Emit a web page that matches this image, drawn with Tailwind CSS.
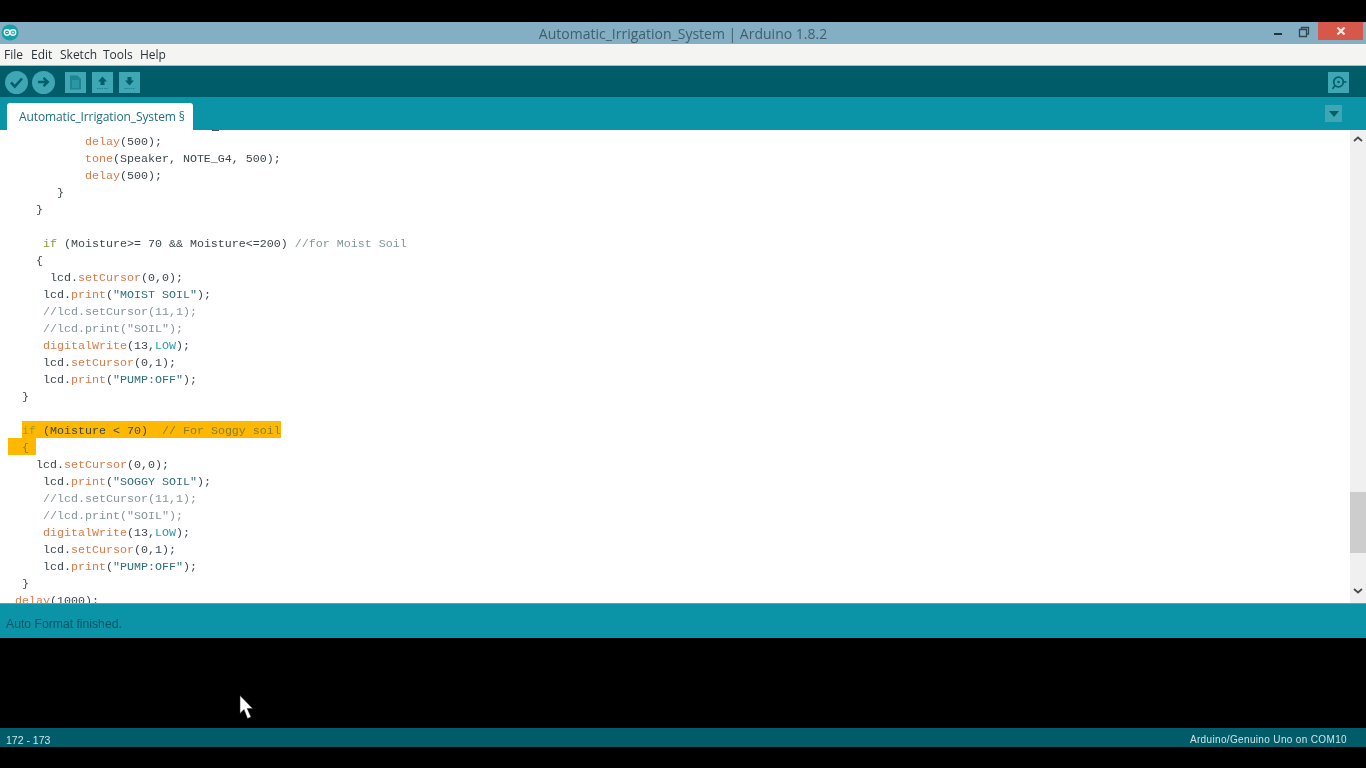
<!DOCTYPE html>
<html><head><meta charset="utf-8"><title>Arduino</title>
<script src="https://cdn.jsdelivr.net/npm/@tailwindcss/browser@4"></script></head>
<body class="m-0 bg-black">
<div class="relative flex flex-col w-[1366px] h-[768px] overflow-hidden bg-black font-['Open_Sans',sans-serif]">
  <div class="h-[22px] shrink-0"></div>
  <!-- title bar -->
  <div class="relative h-[22px] shrink-0 bg-[#84aec3] flex items-center justify-center">
    <svg class="absolute left-[1px] top-[2px]" width="18" height="17" viewBox="0 0 18 17"><ellipse cx="9" cy="8.5" rx="8.5" ry="8" fill="#17a1a5"/><g fill="none" stroke="#e8f6f6" stroke-width="1.4"><circle cx="6" cy="8.5" r="2.7"/><circle cx="12" cy="8.5" r="2.7"/></g><path d="M4.8 8.5h2.4M10.8 8.5h2.4M12 7.3v2.4" stroke="#e8f6f6" stroke-width=".8"/></svg>
    <span class="text-[14px] text-[#3f5f6c] blur-[0.4px]">Automatic_Irrigation_System | Arduino 1.8.2</span>
    <div class="absolute right-[3px] top-0 h-[18px] w-[45px] bg-[#d6584a] flex items-center justify-center">
      <svg width="10" height="10" viewBox="0 0 10 10"><path d="M1.5 1.5l7 7M8.5 1.5l-7 7" stroke="#f6e6e2" stroke-width="2.2"/></svg>
    </div>
    <svg class="absolute left-[1272px] top-[3px]" width="42" height="14" viewBox="0 0 42 14"><path d="M2 9h8" stroke="#23343c" stroke-width="2"/><path d="M27.5 4.5h7v7h-7zM29.5 4.500v-2h7v6.500h-2" fill="none" stroke="#33474f" stroke-width="1.300"/></svg>
  </div>
  <!-- menu -->
  <div class="h-[22px] shrink-0 bg-[#f4f5f3] border-b border-[#a9bcc0] flex items-center text-[12px] text-[#2c3338] pl-[4px] pt-[1px]">
    <span class="w-[27px] blur-[0.35px]">File</span><span class="w-[29px] blur-[0.35px]">Edit</span><span class="w-[43px] blur-[0.35px]">Sketch</span><span class="w-[37px] blur-[0.35px]">Tools</span><span class="blur-[0.35px]">Help</span>
  </div>
  <!-- toolbar -->
  <div class="h-[31px] shrink-0 bg-[#005c68] flex items-center pl-[5px] pr-[17px] pt-[1px]">
    <div class="w-[23px] h-[23px] rounded-full bg-[#3fa7b4] flex items-center justify-center"><svg width="15" height="13" viewBox="0 0 15 13"><path d="M2 6.500l3.800 4L13 2.500" fill="none" stroke="#00606c" stroke-width="2.600"/></svg></div>
    <div class="w-[23px] h-[23px] rounded-full bg-[#3fa7b4] flex items-center justify-center ml-[4px]"><svg width="13" height="12" viewBox="0 0 13 12"><path d="M1 6h8M6.500 1.800L10.800 6l-4.300 4.200" fill="none" stroke="#00606c" stroke-width="2.400"/></svg></div>
    <div class="w-[21px] h-[21px] bg-[#3fa7b4] flex items-center justify-center ml-[10px]"><svg width="13" height="15" viewBox="0 0 13 15"><path d="M1 .5h7.500L12 4v10.500H1z" fill="#1d8594"/><path d="M3 6h7M3 8h7M3 10h7M3 12h7" stroke="#3fa7b4"/></svg></div>
    <div class="w-[21px] h-[21px] bg-[#3fa7b4] flex items-center justify-center ml-[6px]"><svg width="13" height="15" viewBox="0 0 13 15"><path d="M6.500 1.500L11 6.500H8.500V10h-4V6.500H2z" fill="#00606c"/><path d="M1 13.500h11" stroke="#1d8594" stroke-dasharray="1.500 .8"/></svg></div>
    <div class="w-[21px] h-[21px] bg-[#3fa7b4] flex items-center justify-center ml-[6px]"><svg width="13" height="15" viewBox="0 0 13 15"><path d="M6.500 10.500L11 5.500H8.500V2h-4v3.500H2z" fill="#00606c"/><path d="M1 13.500h11" stroke="#1d8594" stroke-dasharray="1.500 .8"/></svg></div>
    <div class="ml-auto w-[21px] h-[21px] bg-[#3fa7b4] flex items-center justify-center"><svg width="17" height="15" viewBox="0 0 17 15"><circle cx="8.500" cy="7" r="4.800" fill="none" stroke="#00606c" stroke-width="1.800"/><circle cx="8.500" cy="7" r="1.300" fill="#00606c"/><path d="M5 10.500L2.500 14M13 7h3.500" stroke="#00606c" stroke-width="1.600"/></svg></div>
  </div>
  <!-- tabs -->
  <div class="h-[33px] shrink-0 bg-[#0b93a8] flex items-end pl-[7px] pr-[24px] relative">
    <div class="w-[186px] h-[27px] bg-white rounded-t-[3px] pl-[12px] flex items-center text-[12px] text-[#1f6f7c] tracking-[-0.1px] whitespace-nowrap blur-[0.35px]">Automatic_Irrigation_System §</div>
    <div class="ml-auto self-start mt-[8px] w-[17px] h-[17px] bg-[#3fa7b4] flex items-center justify-center"><svg width="10" height="6" viewBox="0 0 10 6"><path d="M0 0h10L5 6z" fill="#00606c"/></svg></div>
  </div>
  <!-- editor -->
  <div class="h-[473px] shrink-0 bg-white flex overflow-hidden">
    <div class="flex-1 overflow-hidden">
      <pre class="pt-[4px] pl-[1px] font-['Liberation_Mono',monospace] text-[11.67px] leading-[17px] text-[#3c474c] font-medium blur-[0.45px]"><div>            <span class="text-[#d97a4a]">delay</span>(500);</div><div>            <span class="text-[#d97a4a]">tone</span>(Speaker, NOTE_G4, 500);</div><div>            <span class="text-[#d97a4a]">delay</span>(500);</div><div>        }</div><div>     }</div><div> </div><div>      <span class="text-[#8a9a3a]">if</span> (Moisture&gt;= 70 &amp;&amp; Moisture&lt;=200) <span class="text-[#859599]">//for Moist Soil</span></div><div>     {</div><div>       lcd.<span class="text-[#d97a4a]">setCursor</span>(0,0);</div><div>      lcd.<span class="text-[#d97a4a]">print</span>(<span class="text-[#2f6f78]">"MOIST SOIL"</span>);</div><div>      <span class="text-[#859599]">//lcd.setCursor(11,1);</span></div><div>      <span class="text-[#859599]">//lcd.print("SOIL");</span></div><div>      <span class="text-[#d97a4a]">digitalWrite</span>(13,<span class="text-[#2a9ca6]">LOW</span>);</div><div>      lcd.<span class="text-[#d97a4a]">setCursor</span>(0,1);</div><div>      lcd.<span class="text-[#d97a4a]">print</span>(<span class="text-[#2f6f78]">"PUMP:OFF"</span>);</div><div>   }</div><div> </div><div>   <span class="inline-block h-[17px] align-top shadow-[0_-2px_0_#ffb800] bg-[linear-gradient(#ffb800_15px,transparent_15px)]"><span class="text-[#a39a20]">if</span> (Moisture &lt; 70)  <span class="text-[#8a7d2a]">// For Soggy soil</span></span></div><div> <span class="inline-block h-[17px] align-top shadow-[0_-2px_0_#ffb800] bg-[linear-gradient(#ffb800_15px,transparent_15px)]">  <span class="text-[#8a7d2a]">{</span> </span></div><div>     lcd.<span class="text-[#d97a4a]">setCursor</span>(0,0);</div><div>      lcd.<span class="text-[#d97a4a]">print</span>(<span class="text-[#2f6f78]">"SOGGY SOIL"</span>);</div><div>      <span class="text-[#859599]">//lcd.setCursor(11,1);</span></div><div>      <span class="text-[#859599]">//lcd.print("SOIL");</span></div><div>      <span class="text-[#d97a4a]">digitalWrite</span>(13,<span class="text-[#2a9ca6]">LOW</span>);</div><div>      lcd.<span class="text-[#d97a4a]">setCursor</span>(0,1);</div><div>      lcd.<span class="text-[#d97a4a]">print</span>(<span class="text-[#2f6f78]">"PUMP:OFF"</span>);</div><div>   }</div><div>  <span class="text-[#d97a4a]">delay</span>(1000);</div></pre>
    </div>
    <div class="w-[16px] shrink-0 bg-[#f0f0f0] flex flex-col items-center">
      <svg class="mt-[6px]" width="10" height="6" viewBox="0 0 10 6"><path d="M1 5l4-3.500L9 5" fill="none" stroke="#4a4a4a" stroke-width="1.700"/></svg>
      <div class="mt-[350px] w-full h-[61px] bg-[#cdcdcd]"></div>
      <svg class="mt-[35px]" width="10" height="6" viewBox="0 0 10 6"><path d="M1 1l4 3.500L9 1" fill="none" stroke="#4a4a4a" stroke-width="1.700"/></svg>
    </div>
  </div>
  <!-- status -->
  <div class="h-[35px] shrink-0 bg-[#0b93a8] border-t border-[#6f9ea6] flex items-center pl-[6px] pt-[6px] font-['Liberation_Sans',sans-serif] text-[12.2px] text-[#0d5665] blur-[0.35px]">Auto Format finished.</div>
  <div class="h-[90px] shrink-0 bg-black"></div>
  <!-- bottom bar -->
  <div class="h-[19px] shrink-0 bg-[#005c68] flex items-center justify-between pl-[6px] pr-[19px] pt-[5px] text-[#cfe3e6] text-[10px] font-['Liberation_Sans',sans-serif]">
    <span class="text-[10.5px] pt-[2px] blur-[0.35px]">172 - 173</span><span class="tracking-[0.35px] pb-[1px] blur-[0.35px]">Arduino/Genuino Uno on COM10</span>
  </div>
  <!-- clipped underscore of the line above the visible code -->
  <div class="absolute left-[212px] top-[130px] w-[7px] h-[1px] bg-[#4a5458]"></div>
  <!-- cursor -->
  <svg class="absolute left-[239px] top-[695px]" width="15" height="25" viewBox="0 0 15 25"><path d="M1 .5v18l4-4 3.500 9 3.500-1.500-3.800-8.500h5.500z" fill="#fff" stroke="#222" stroke-width=".5"/></svg>
</div>
</body></html>
